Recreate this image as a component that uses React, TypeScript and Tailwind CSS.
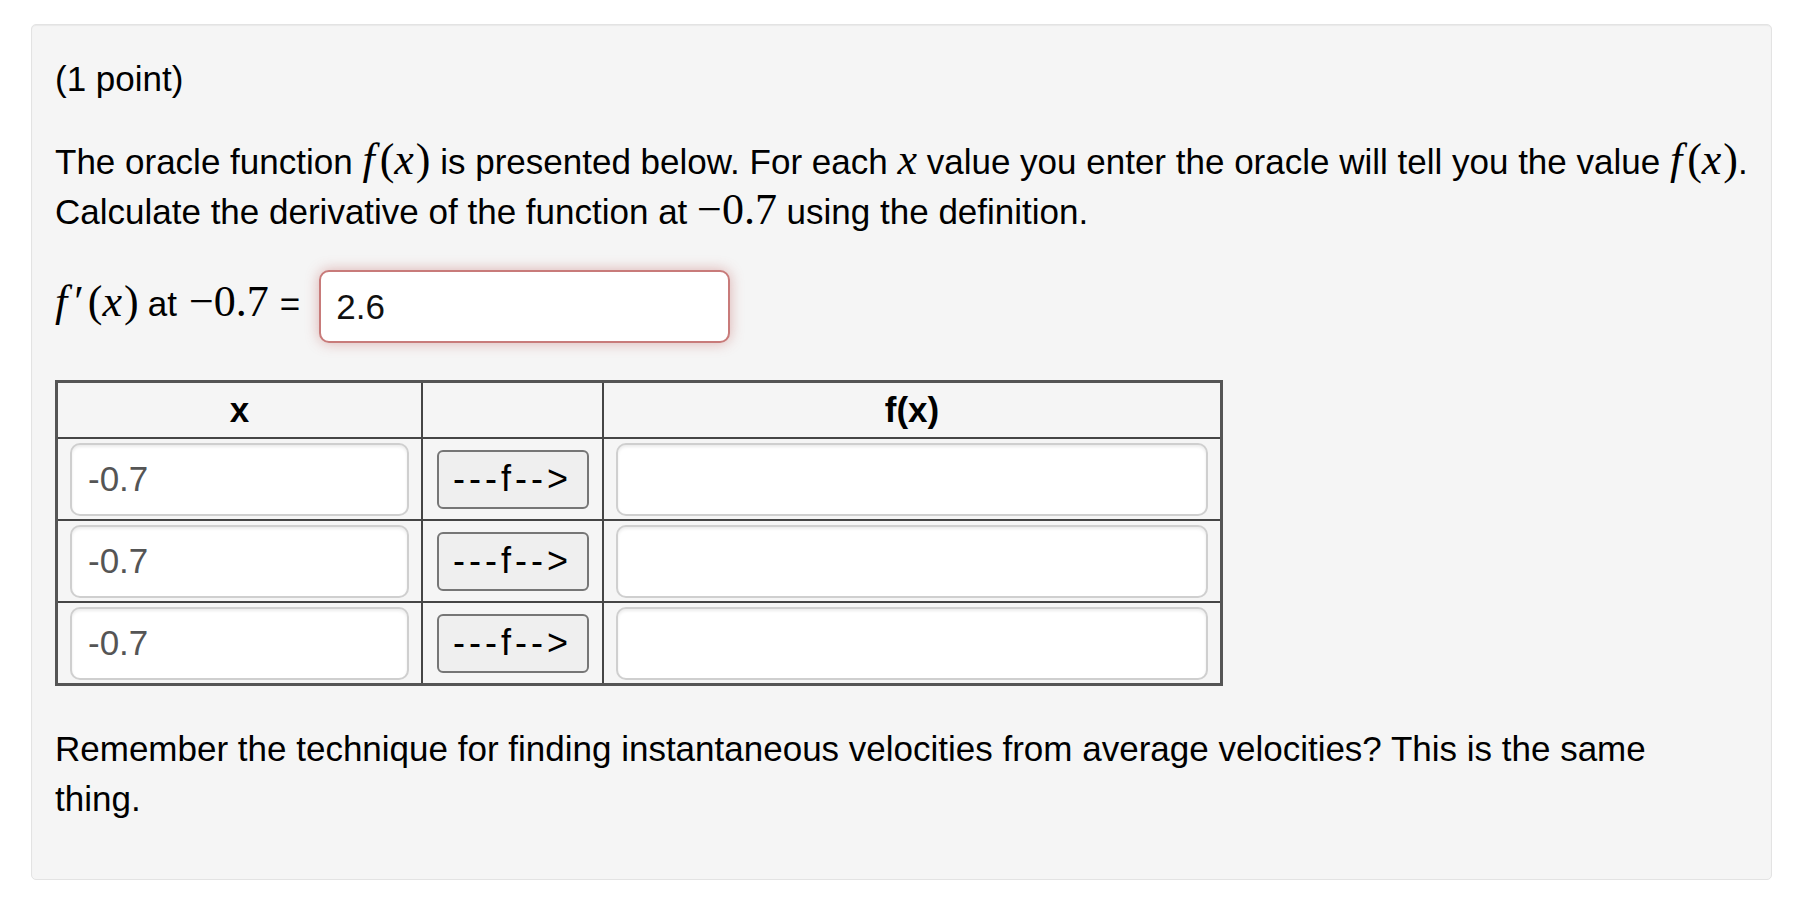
function M({ children }: { children: React.ReactNode }) {
  return (
    <span className="font-['Liberation_Serif',serif] text-[44px] leading-none">{children}</span>
  );
}

function Fx() {
  return (
    <M>
      <i className="mr-[5px]">f</i>(<i className="pr-[2px]">x</i>)
    </M>
  );
}

const rows = ['-0.7', '-0.7', '-0.7'];

export default function App() {
  return (
    <div className="min-h-screen bg-white pt-[24px] pl-[31px] pr-[30px] font-['Liberation_Sans',Arial,sans-serif] text-[35px] leading-[50px] text-black">
      <div className="rounded-[5px] border border-[#e3e3e3] bg-[#f5f5f5] px-[23px] pt-[29px] pb-[55px] shadow-[inset_0_1px_1px_rgba(0,0,0,0.05)]">
        <p>(1 point)</p>

        <p className="mt-[33px]">
          The oracle function <Fx /> is presented below. For each{' '}
          <M>
            <i>x</i>
          </M>{' '}
          value you enter the oracle will tell you the value <Fx />.
          <br />
          Calculate the derivative of the function at <M>−0.7</M> using the definition.
        </p>

        <div className="mt-[33px] flex h-[73px] items-center">
          <span className="pb-[6px] whitespace-nowrap">
            <M>
              <i className="mr-[7px]">f</i>
              <span className="mr-[4px]">′</span>(<i className="pr-[2px]">x</i>)
            </M>
            <span className="ml-[9px]">at</span>
            <M>
              <span className="ml-[12px]">−0.7</span>
            </M>
            <span className="ml-[11px]">=</span>
          </span>
          <input
            readOnly
            defaultValue="2.6"
            className="ml-[19px] h-[73px] w-[411px] rounded-[10px] border-2 border-[#c87b7a] bg-white px-[15px] text-[#111] outline-none shadow-[0_0_14px_rgba(185,74,72,0.4)]"
          />
        </div>

        <div className="mt-[37px] grid w-[1168px] grid-cols-[363px_179px_616px] gap-[2px] border-[3px] border-[#555] bg-[#454545]">
          <div className="flex h-[54px] items-center justify-center bg-[#f5f5f5] font-bold">x</div>
          <div className="bg-[#f5f5f5]" />
          <div className="flex items-center justify-center bg-[#f5f5f5] font-bold">f(x)</div>
          {rows.map((v, i) => (
            <Row key={i} value={v} />
          ))}
        </div>

        <p className="mt-[38px]">
          Remember the technique for finding instantaneous velocities from average velocities? This is
          the same
          <br />
          thing.
        </p>
      </div>
    </div>
  );
}

function Row({ value }: { value: string }) {
  return (
    <>
      <div className="flex h-[80px] items-center justify-center bg-[#f5f5f5]">
        <input
          readOnly
          defaultValue={value}
          className="h-[73px] w-[339px] rounded-[10px] border-2 border-[#cfcfcf] bg-white px-[16px] text-[#555] outline-none shadow-[inset_0_2px_3px_rgba(0,0,0,0.08)]"
        />
      </div>
      <div className="flex items-center justify-center bg-[#f5f5f5]">
        <button className="h-[59px] w-[152px] rounded-[6px] border-2 border-[#767676] bg-[#efefef] text-[36px] leading-none tracking-[4px] text-black">
          {'---f-->'}
        </button>
      </div>
      <div className="flex items-center justify-center bg-[#f5f5f5]">
        <input
          readOnly
          className="h-[73px] w-[592px] rounded-[10px] border-2 border-[#cfcfcf] bg-white px-[16px] outline-none shadow-[inset_0_2px_3px_rgba(0,0,0,0.08)]"
        />
      </div>
    </>
  );
}
